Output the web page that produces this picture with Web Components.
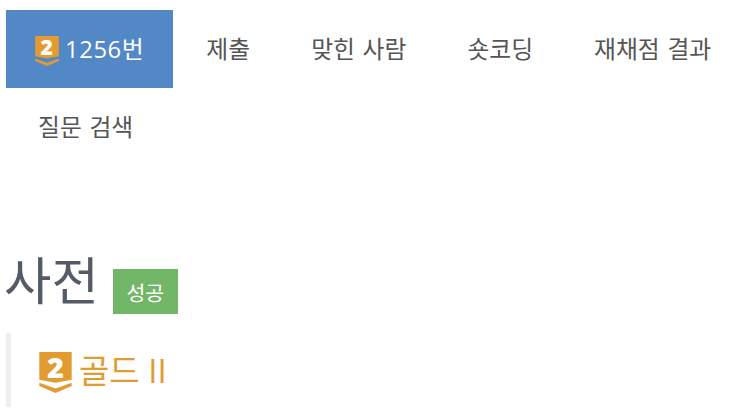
<!DOCTYPE html>
<html lang="ko">
<head>
<meta charset="utf-8">
<title>사전</title>
<style>
  html, body { margin: 0; background: #fff; }
  body { font-family: "Open Sans", "Noto Sans CJK KR", sans-serif; color: #555; overflow: hidden; }
  problem-page { display: block; padding: 10px 0 0 6px; }
</style>
</head>
<body>
<template id="tier-tpl">
  <style>
    :host { display: inline-block; line-height: 0; }
    svg { display: block; width: 100%; height: 100%; overflow: visible; }
  </style>
  <svg viewBox="0 0 24 30.4">
    <path d="M0 0H24V20.5L12 22.8L0 20.5Z" fill="#e29b30"/>
    <path d="M0 22.8L12 27L24 22.8V25.3L12 30.4L0 25.3Z" fill="#e29b30"/>
    <text x="12" y="19.2" text-anchor="middle" font-family="Open Sans, sans-serif" font-weight="800" font-size="21.4" fill="#fff">2</text>
  </svg>
</template>
<template id="nav-tpl">
  <style>
    :host { display: flex; flex-wrap: wrap; font-size: 23.8px; word-spacing: 1.5px; }
  </style>
  <slot></slot>
</template>
<template id="tab-tpl">
  <style>
    :host { display: flex; align-items: center; gap: 6px; height: 78px; padding: 0 29px 3px; margin-left: 3px; box-sizing: border-box; color: #555; white-space: nowrap; }
    :host([active]) { background: #5288c6; color: #fff; margin: 0 1px 0 0; letter-spacing: .6px; }
    slot[name="icon"]::slotted(*) { width: 24px; height: 30px; margin-top: 6px; }
  </style>
  <slot name="icon"></slot><slot></slot>
</template>
<template id="title-tpl">
  <style>
    :host { display: flex; align-items: flex-end; gap: 14px; margin-top: 83px; }
    h1 { margin: 0 0 3px -2px; font-size: 51.5px; font-weight: 400; line-height: 62px; color: #535b66; }
    .badge { background: #72b667; color: #fff; font-size: 20.5px; width: 65px; height: 45px; display: flex; align-items: center; justify-content: center; }
  </style>
  <h1><slot></slot></h1><span class="badge"><slot name="badge"></slot></span>
</template>
<template id="tier-quote-tpl">
  <style>
    :host { display: flex; align-items: center; gap: 7px; border-left: 5px solid #eee; padding: 0 0 3px 28px; height: 74px; box-sizing: border-box; margin-top: 19px; color: #e29b30; font-size: 33px; }
    slot[name="icon"]::slotted(*) { width: 33px; height: 41px; margin-top: 8px; }
  </style>
  <slot name="icon"></slot><slot></slot>
</template>

<problem-page>
  <problem-nav>
    <problem-tab active><tier-icon slot="icon"></tier-icon>1256번</problem-tab>
    <problem-tab>제출</problem-tab>
    <problem-tab>맞힌 사람</problem-tab>
    <problem-tab>숏코딩</problem-tab>
    <problem-tab>재채점 결과</problem-tab>
    <problem-tab>질문 검색</problem-tab>
  </problem-nav>
  <problem-title>사전<span slot="badge">성공</span></problem-title>
  <tier-quote><tier-icon slot="icon"></tier-icon>골드 II</tier-quote>
</problem-page>

<script>
  class TemplateElement extends HTMLElement {
    constructor(tplId) {
      super();
      this.attachShadow({ mode: "open" });
      this.shadowRoot.appendChild(document.getElementById(tplId).content.cloneNode(true));
    }
  }
  customElements.define("tier-icon", class extends TemplateElement { constructor() { super("tier-tpl"); } });
  customElements.define("problem-nav", class extends TemplateElement { constructor() { super("nav-tpl"); } });
  customElements.define("problem-tab", class extends TemplateElement { constructor() { super("tab-tpl"); } });
  customElements.define("problem-title", class extends TemplateElement { constructor() { super("title-tpl"); } });
  customElements.define("tier-quote", class extends TemplateElement { constructor() { super("tier-quote-tpl"); } });
</script>
</body>
</html>
